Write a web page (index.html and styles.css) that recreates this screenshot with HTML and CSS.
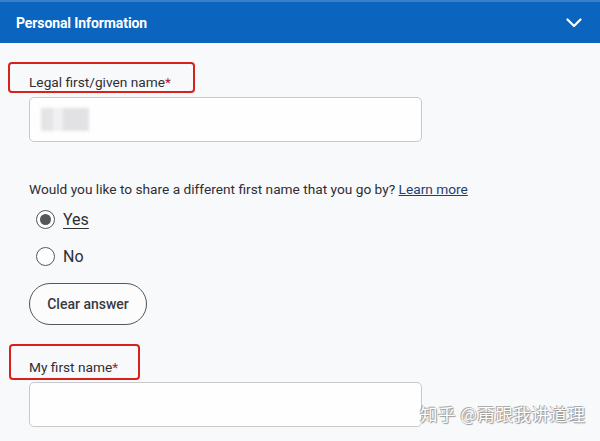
FILE: index.html
```html
<!DOCTYPE html>
<html lang="en">
<head>
<meta charset="utf-8">
<title>Personal Information</title>
<link rel="stylesheet" href="styles.css">
</head>
<body>
<header class="section-header">
  <h2 class="section-title">Personal Information</h2>
  <svg class="chevron" width="16" height="10" viewBox="0 0 16 10" aria-hidden="true">
    <path d="M1.5 1.5 L8 8 L14.5 1.5" fill="none" stroke="#fff" stroke-width="2.2" stroke-linecap="round" stroke-linejoin="round"/>
  </svg>
</header>

<main class="content">
  <div class="field">
    <label class="field-label">Legal first/given name<span class="req">*</span><span class="annot annot-a"></span></label>
    <div class="text-input"><span class="redacted"></span></div>
  </div>

  <p class="question">Would you like to share a different first name that you go by? <a class="link" href="#">Learn more</a></p>

  <div class="radio-group">
    <div class="radio-row"><span class="radio checked"></span><span class="radio-label underline">Yes</span></div>
    <div class="radio-row"><span class="radio"></span><span class="radio-label">No</span></div>
  </div>

  <button class="clear-btn" type="button">Clear answer</button>

  <div class="field field-2">
    <label class="field-label">My first name<span class="req">*</span><span class="annot annot-b"></span></label>
    <div class="text-input"></div>
  </div>
</main>

<div class="watermark">知乎 @甭跟我讲道理</div>
</body>
</html>
```

FILE: styles.css
```css
* { box-sizing: border-box; }

html, body {
  margin: 0;
  padding: 0;
}

body {
  width: 600px;
  height: 441px;
  overflow: hidden;
  background: #f8f9fb;
  font-family: Roboto, "Noto Sans", "Liberation Sans", sans-serif;
  color: #2e2e33;
  position: relative;
}

.section-header {
  height: 43px;
  background: #0b64bd;
  border-top: 2px solid #3a7fcb;
  display: flex;
  align-items: center;
  justify-content: space-between;
  padding: 0 18px 0 16px;
}

.section-title {
  margin: 0;
  font-size: 14px;
  font-weight: 700;
  color: #ffffff;
  letter-spacing: -0.1px;
}

.chevron {
  display: block;
}

.content {
  padding: 29px 0 0 29px;
}

.field-label {
  position: relative;
  display: inline-block;
  font-size: 13.7px;
  line-height: 20px;
  color: #2e2e33;
}

.req {
  color: #b5123a;
}

.annot {
  position: absolute;
  border: 2.5px solid #d7211c;
  border-radius: 4px;
}

.annot-a {
  left: -21px;
  top: -10px;
  right: -24px;
  bottom: -1px;
}

.annot-b {
  left: -20px;
  top: -13px;
  right: -22px;
  bottom: -3px;
}

.text-input {
  margin-top: 5px;
  width: 393px;
  height: 45px;
  background: #fefefe;
  border: 1px solid #c9c9cc;
  border-radius: 5px;
  padding: 10px 11px;
}

.redacted {
  display: block;
  width: 48px;
  height: 23px;
  background: linear-gradient(90deg, #e4e4e6 0 25%, #f0f0f2 25% 45%, #e2e2e4 45% 100%);
  filter: blur(1.5px);
}

.question {
  margin: 37px 0 2px;
  font-size: 13.7px;
  line-height: 20px;
  color: #2e2e33;
}

.link {
  color: #1f3d73;
  text-decoration: underline;
}

.radio-group {
  display: flex;
  flex-direction: column;
}

.radio-row {
  height: 37px;
  display: flex;
  align-items: center;
  gap: 8px;
  padding-left: 7px;
}

.radio {
  width: 19px;
  height: 19px;
  border: 1.5px solid #55565c;
  border-radius: 50%;
  background: #ffffff;
  display: flex;
  align-items: center;
  justify-content: center;
}

.radio.checked::after {
  content: "";
  width: 11px;
  height: 11px;
  border-radius: 50%;
  background: #55565c;
}

.radio-label {
  font-size: 16px;
  line-height: 20px;
  color: #2e2e33;
}

.underline {
  text-decoration: underline;
  text-underline-offset: 3px;
}

.clear-btn {
  margin-top: 8px;
  width: 118px;
  height: 42px;
  border: 1.5px solid #55565c;
  border-radius: 21px;
  background: #fcfcfd;
  font-family: Roboto, "Noto Sans", "Liberation Sans", sans-serif;
  font-size: 14px;
  font-weight: 500;
  color: #3a3a40;
  padding: 0;
}

.field-2 {
  margin-top: 32px;
}

.watermark {
  position: absolute;
  left: 420px;
  top: 402px;
  font-family: "Noto Sans CJK SC", sans-serif;
  font-size: 17.5px;
  line-height: 24px;
  color: #ffffff;
  letter-spacing: 0.5px;
  text-shadow: 0 0 1px #8a8a8a, 1px 1px 1px #9a9a9a, -1px -1px 0 #b0b0b0;
}
```
